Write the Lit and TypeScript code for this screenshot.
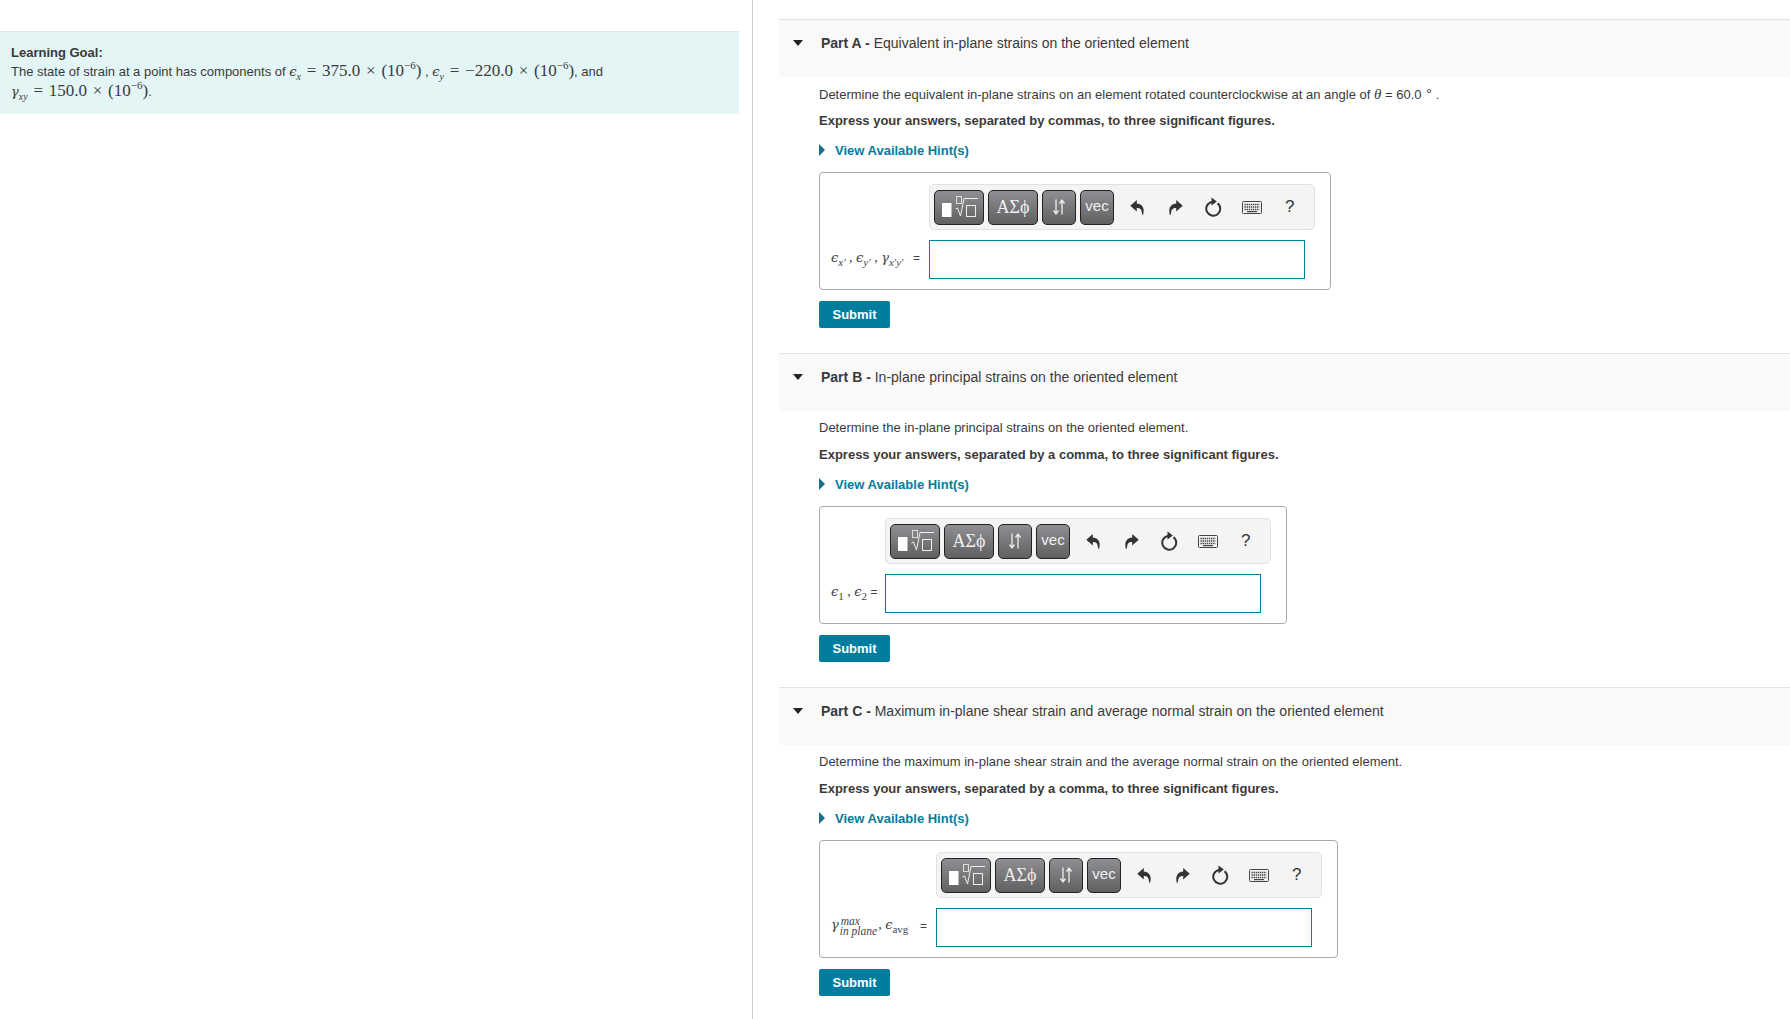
import { LitElement, html, css, svg } from "lit";
import { customElement } from "lit/decorators.js";

const kbd = svg`<svg width="20" height="13" viewBox="0 0 20 13"><rect x="0.5" y="0.5" width="19" height="12" rx="1" fill="#f4f4f4" stroke="#444"/><path d="M2.5 3.5h15M2.5 6h15M2.5 8.5h15" stroke="#444" stroke-width="1.4" stroke-dasharray="1.4 .7"/><path d="M5 10.6h10" stroke="#444" stroke-width="1.2"/></svg>`;
const undo = svg`<svg width="15" height="17" viewBox="0 0 15 17"><path d="M6.800 1 .3 6.800l6.500 5.700V9c3.200 0 4.800 1.200 5.200 5.400l1 2c1.300-4.500 1.500-11-6.200-11.800Z" fill="#333"/></svg>`;
const redo = svg`<svg width="15" height="17" viewBox="0 0 15 17"><path d="M8.200 1l6.500 5.800-6.500 5.700V9C5 9 3.400 10.200 3 14.400l-1 2C.7 11.900.5 5.400 8.200 4.600Z" fill="#333"/></svg>`;
const reset = svg`<svg width="18" height="20" viewBox="0 0 18 20"><path d="M13.500 6.200A7 7 0 1 1 8 4.900" fill="none" stroke="#333" stroke-width="2"/><path d="M7.500 0.600 12.800 4.400 7.500 8.400Z" fill="#333"/></svg>`;
const templ = svg`<svg width="44" height="26" viewBox="0 0 44 26"><rect x="5" y="9" width="9.500" height="14" fill="#fff"/><rect x="19.500" y="2.500" width="5" height="7" fill="none" stroke="#ddd"/><path d="M18.500 15l2 -1 3 8 3.500-17.500h14" fill="none" stroke="#eee"/><rect x="29.500" y="11.500" width="9" height="11" fill="none" stroke="#eee"/></svg>`;
const arrows = svg`<svg width="14" height="18" viewBox="0 0 14 18"><path d="M4 1.500v14M1.500 12.500 4 16l2.500-3.500M10 16.500v-14M7.500 5.500 10 2l2.500 3.500" fill="none" stroke="#eee" stroke-width="1.300"/></svg>`;

const g = (s: string) => html`<i class="greek">${s}</i>`;
const sub = (s: string) => html`<sub class="m-sub">${s}</sub>`;

interface Part {
  letter: string; title: string; intro: unknown; express: string; label: unknown; labelWidth: number;
}

const parts: Part[] = [
  {
    letter: "A",
    title: "Equivalent in-plane strains on the oriented element",
    intro: html`Determine the equivalent in-plane strains on an element rotated counterclockwise at an angle of <i class="theta">θ</i> = 60.0 <span class="deg">°</span> .`,
    express: "Express your answers, separated by commas, to three significant figures.",
    label: html`${g("ϵ")}${sub("x′")} , ${g("ϵ")}${sub("y′")} , ${g("γ")}${sub("x′y′")}`,
    labelWidth: 90,
  },
  {
    letter: "B",
    title: "In-plane principal strains on the oriented element",
    intro: html`Determine the in-plane principal strains on the oriented element.`,
    express: "Express your answers, separated by a comma, to three significant figures.",
    label: html`${g("ϵ")}<sub class="m-sub up">1</sub> , ${g("ϵ")}<sub class="m-sub up">2</sub>`,
    labelWidth: 46,
  },
  {
    letter: "C",
    title: "Maximum in-plane shear strain and average normal strain on the oriented element",
    intro: html`Determine the maximum in-plane shear strain and the average normal strain on the oriented element.`,
    express: "Express your answers, separated by a comma, to three significant figures.",
    label: html`${g("γ")}<span class="stack"><i>max</i><i>in plane</i></span>, ${g("ϵ")}<sub class="m-sub up">avg</sub>`,
    labelWidth: 97,
  },
];

@customElement("app-root")
export class AppRoot extends LitElement {
  static styles = css`
    :host { display: block; width: 1790px; height: 1019px; overflow: hidden; background: #fff;
      font-family: "Liberation Sans", Arial, sans-serif; color: #3a3a3a; font-size: 13px; }
    * { box-sizing: border-box; }
    .page { display: flex; height: 1019px; }
    .left { width: 753px; flex: none; border-right: 1px solid #cfcfcf; padding: 31px 13px 0 0; }
    .goal { height: 83px; background: #e4f5f5; border-top: 1px solid #dfe5e6; padding: 12px 0 0 11px; line-height: 18px; }
    .goal .head { font-weight: bold; line-height: 18px; }
    .goal .line { height: 20px; line-height: 18px; }
    .goal .math { font-family: "Liberation Serif", serif; font-size: 17px; word-spacing: 1.500px; }
    .goal .greek { font-family: "DejaVu Serif", serif; font-size: 13px; }
    .goal sup { font-size: 11px; line-height: 0; }
    .goal sub { font-size: 10px; line-height: 0; }
    .right { flex: 1; padding: 19px 0 0 26px; min-width: 0; }
    .part { height: 334px; }
    .phead { height: 58px; background: #f9f9f9; border-top: 1px solid #e3e3e3; position: relative; padding: 13px 0 0 42px; font-size: 14px; line-height: 20px; }
    .phead::before { content: ""; position: absolute; left: 14px; top: 20px; border-left: 5.500px solid transparent; border-right: 5.500px solid transparent; border-top: 6px solid #222; }
    .body { padding: 0 0 0 40px; }
    .intro { margin: 0; padding-top: 8px; line-height: 18px; height: 26px; }
    .theta { font-family: "Liberation Serif", serif; font-size: 15px; }
    .deg { font-size: 15px; margin-left: 1px; }
    .express { margin: 0; padding-top: 9px; font-weight: bold; height: 26px; line-height: 17px; }
    .hint { display: flex; align-items: center; gap: 10px; color: #007d9e; font-weight: bold; height: 33px; padding-top: 9px; }
    .hint::before { content: ""; border-top: 6px solid transparent; border-bottom: 6px solid transparent; border-left: 6px solid #1b6f8a; }
    .box { display: inline-grid; grid-template-columns: auto auto; margin-top: 10px; border: 1px solid #aaa; border-radius: 4px;
      padding: 11px 15px 10px 11px; column-gap: 8px; row-gap: 10px; align-items: center; }
    .toolbar { grid-column: 2; width: 386px; height: 46px; background: #f4f4f4; border: 1px solid #e1e1e1; border-radius: 5px;
      display: flex; align-items: center; padding-left: 4px; gap: 4px; }
    .tb { height: 35px; border: 1px solid #222; border-radius: 5px; background: linear-gradient(#8f8f93, #606062); color: #f0f0f0;
      display: flex; align-items: center; justify-content: center; }
    .tb.a { width: 50px; } .tb.b { width: 50px; font-family: "Liberation Serif", serif; font-size: 18px; }
    .tb.c { width: 34px; } .tb.d { width: 34px; font-size: 15px; padding-bottom: 3px; }
    .ic { width: 34.200px; display: flex; align-items: center; justify-content: center; color: #333; font-size: 17px; }
    .ic.first { margin-left: 2px; }
    .label { display: flex; align-items: center; font-family: "Liberation Serif", serif; font-size: 14px; color: #444; white-space: pre; padding-bottom: 3px; }
    .greek { font-family: "DejaVu Serif", serif; font-size: 13px; }
    .m-sub { font-size: 11px; font-style: italic; line-height: 0; }
    .m-sub.up { font-style: normal; }
    .stack { display: inline-flex; flex-direction: column; vertical-align: middle; font-size: 11.500px; line-height: 10px; margin: 0 1px; }
    .stack i:first-child { padding-left: 1px; }
    .eq { font-family: "Liberation Sans", sans-serif; font-size: 12px; margin-left: auto; margin-right: 1px; }
    input { width: 376px; height: 39px; grid-column: 2; border: 1px solid #007d9e; border-radius: 0; padding: 0; margin: 0; outline: none; display: block; }
    .submit { display: block; margin-top: 11px; width: 71px; height: 27px; border: none; border-radius: 2px; background: #007d9e; color: #fff;
      font: bold 13px "Liberation Sans", sans-serif; padding: 0; }
  `;

  render() {
    return html`<div class="page">
      <div class="left">
        <div class="goal">
          <div class="head">Learning Goal:</div>
          <div class="line">The state of strain at a point has components of <span class="math">${g("ϵ")}<sub><i>x</i></sub> = 375.0 × (10<sup>−6</sup>)</span> , <span class="math">${g("ϵ")}<sub><i>y</i></sub> = −220.0 × (10<sup>−6</sup>)</span>, and</div>
          <div class="line"><span class="math">${g("γ")}<sub><i>xy</i></sub> = 150.0 × (10<sup>−6</sup>)</span>.</div>
        </div>
      </div>
      <div class="right">
        ${parts.map((p) => html`<section class="part">
          <div class="phead"><b>Part ${p.letter} - </b>${p.title}</div>
          <div class="body">
            <p class="intro">${p.intro}</p>
            <p class="express">${p.express}</p>
            <div class="hint">View Available Hint(s)</div>
            <div class="box">
              <div class="toolbar">
                <div class="tb a">${templ}</div>
                <div class="tb b">ΑΣϕ</div>
                <div class="tb c">${arrows}</div>
                <div class="tb d">vec</div>
                <div class="ic first">${undo}</div><div class="ic">${redo}</div><div class="ic">${reset}</div><div class="ic">${kbd}</div><div class="ic">?</div>
              </div>
              <div class="label" style="width:${p.labelWidth}px"><span>${p.label}</span><span class="eq"> =</span></div>
              <input type="text" aria-label="answer" />
            </div>
            <button class="submit">Submit</button>
          </div>
        </section>`)}
      </div>
    </div>`;
  }
}
